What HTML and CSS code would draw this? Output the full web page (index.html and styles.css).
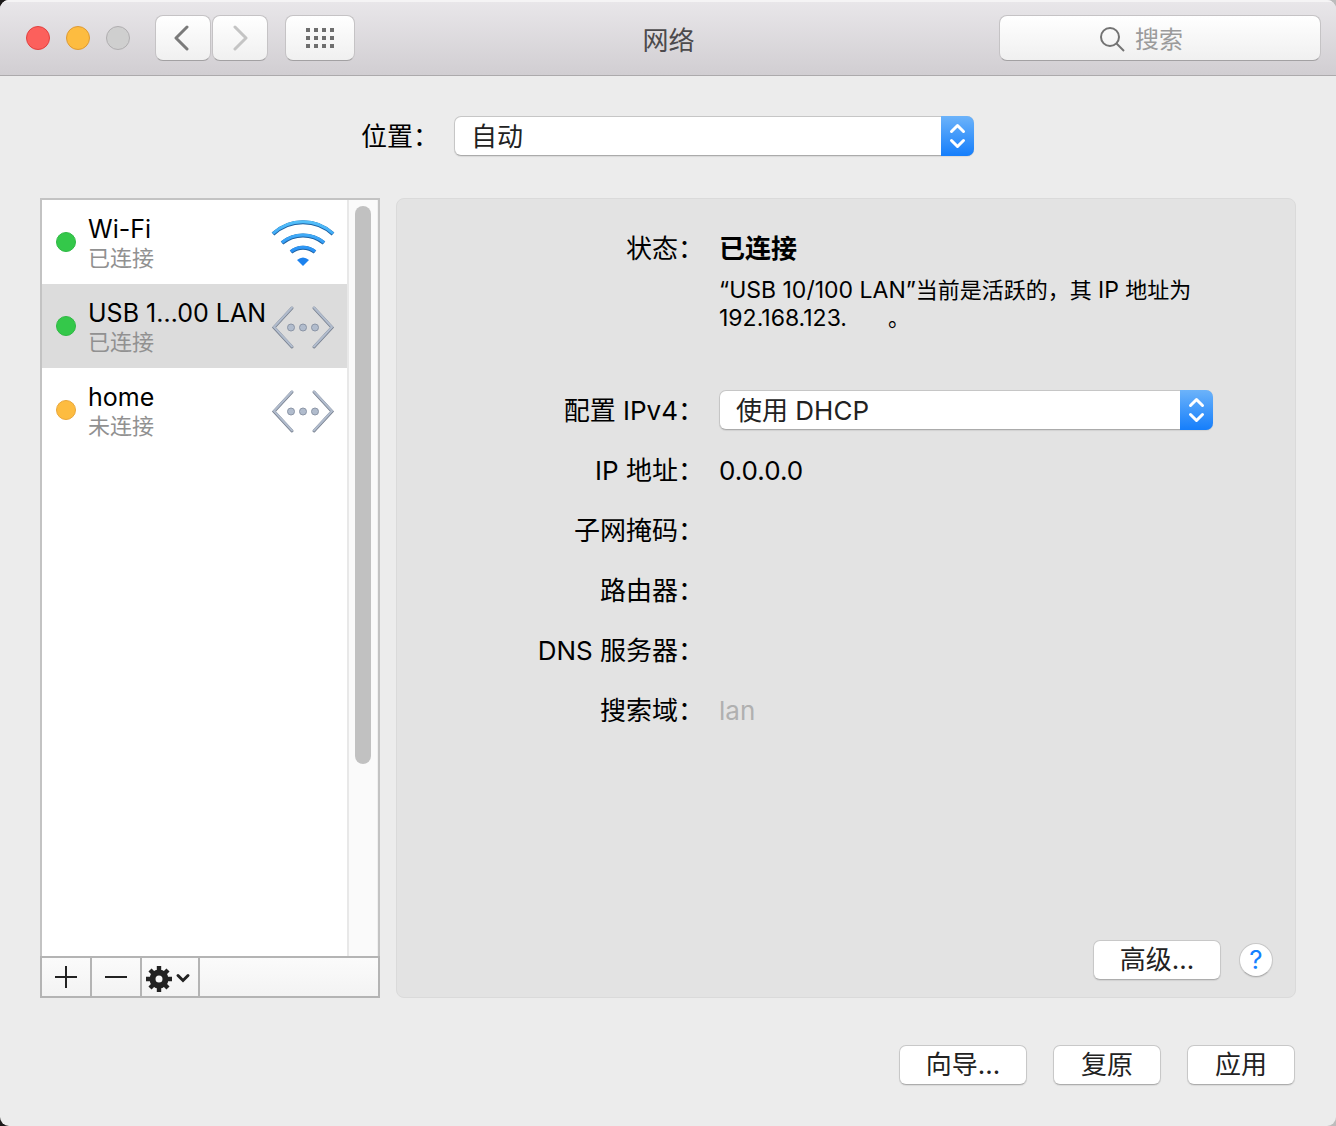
FILE: index.html
```html
<!DOCTYPE html>
<html lang="zh-CN">
<head>
<meta charset="utf-8">
<title>网络</title>
<link rel="stylesheet" href="styles.css">
</head>
<body>
<div class="window">
  <header class="titlebar">
    <div class="titlebar-left">
      <div class="lights">
        <button class="light light-close" aria-label="关闭"></button>
        <button class="light light-min" aria-label="最小化"></button>
        <button class="light light-zoom" aria-label="缩放" disabled></button>
      </div>
      <div class="nav">
        <button class="tool" aria-label="后退">
          <svg width="18" height="26" viewBox="0 0 18 26" fill="none" stroke="#7a7a7a" stroke-width="3" stroke-linecap="round" stroke-linejoin="round"><path d="M13 2 2 13l11 11"/></svg>
        </button>
        <button class="tool" aria-label="前进">
          <svg width="16" height="26" viewBox="0 0 16 26" fill="none" stroke="#c4c4c4" stroke-width="3" stroke-linecap="round" stroke-linejoin="round"><path d="M3 2l11 11L3 24"/></svg>
        </button>
      </div>
      <button class="tool tool-grid" aria-label="显示全部">
        <svg width="28" height="20" viewBox="0 0 28 20" fill="#6e6e6e"><path d="M0 0h4v4H0zM8 0h4v4H8zM16 0h4v4h-4zM24 0h4v4h-4zM0 8h4v4H0zM8 8h4v4H8zM16 8h4v4h-4zM24 8h4v4h-4zM0 16h4v4H0zM8 16h4v4H8zM16 16h4v4h-4zM24 16h4v4h-4z"/></svg>
      </button>
    </div>
    <h1 class="title">网络</h1>
    <div class="search">
      <svg class="search-icon" width="26" height="26" viewBox="0 0 26 26" fill="none" stroke="#737373" stroke-width="2"><circle cx="10" cy="11" r="9"/><path d="M16 17l8 8"/></svg>
      <input class="search-input" type="text" placeholder="搜索" aria-label="搜索">
    </div>
  </header>

  <div class="location">
    <label for="location">位置：</label>
    <div class="popup popup-location">
      <select id="location"><option>自动</option></select>
      <svg class="popup-arrows" width="33" height="40" viewBox="0 0 33 40" fill="none" stroke="#fff" stroke-width="3" stroke-linecap="round" stroke-linejoin="round"><path d="M10.500 15.500l6-6 6 6M10.500 24.500l6 6 6-6"/></svg>
    </div>
  </div>

  <main class="main">
    <section class="sidebar">
      <div class="services">
        <ul class="service-list">
          <li class="service">
            <span class="dot dot-on"></span>
            <div class="service-text"><div class="service-name">Wi-Fi</div><div class="service-state">已连接</div></div>
            <svg width="64" height="48" viewBox="0 0 64 48" fill="none">
              <defs><linearGradient id="wifi" x1="0" y1="2" x2="0" y2="48" gradientUnits="userSpaceOnUse"><stop offset="0" stop-color="#55c2fa"/><stop offset="1" stop-color="#147af3"/></linearGradient></defs>
              <g stroke="#1c5f9f" stroke-width="4"><path d="M2 16A44 44 0 0 1 62 16M11 25A33 33 0 0 1 53 25M20 34A19 19 0 0 1 44 34"/></g>
              <g stroke="url(#wifi)" stroke-width="3"><path d="M2 15.500A44 44 0 0 1 62 15.500M11 24.500A33 33 0 0 1 53 24.500M20 33.500A19 19 0 0 1 44 33.500"/></g>
              <path d="M26 42q6-5 12 0l-6 6z" fill="#1c82ee"/>
            </svg>
          </li>
          <li class="service service-selected">
            <span class="dot dot-on"></span>
            <div class="service-text"><div class="service-name">USB 1…00 LAN</div><div class="service-state">已连接</div></div>
            <svg width="64" height="48" viewBox="0 0 64 48" fill="none">
              <g stroke="#77808f" stroke-width="3" stroke-linecap="round"><path d="M21 6 3 25.500l18 19.500M43 6l18 19.500L43 45"/></g>
              <g stroke="#b1bccd" stroke-width="2" stroke-linecap="round"><path d="M21 5.500 3 25l18 19.500M43 5.500 61 25 43 44.500"/></g>
              <g fill="#b1bccd" stroke="#8b95a6"><circle cx="20" cy="25.500" r="3.500"/><circle cx="32" cy="25.500" r="3.500"/><circle cx="44" cy="25.500" r="3.500"/></g>
            </svg>
          </li>
          <li class="service">
            <span class="dot dot-idle"></span>
            <div class="service-text"><div class="service-name">home</div><div class="service-state">未连接</div></div>
            <svg width="64" height="48" viewBox="0 0 64 48" fill="none">
              <g stroke="#77808f" stroke-width="3" stroke-linecap="round"><path d="M21 6 3 25.500l18 19.500M43 6l18 19.500L43 45"/></g>
              <g stroke="#b1bccd" stroke-width="2" stroke-linecap="round"><path d="M21 5.500 3 25l18 19.500M43 5.500 61 25 43 44.500"/></g>
              <g fill="#b1bccd" stroke="#8b95a6"><circle cx="20" cy="25.500" r="3.500"/><circle cx="32" cy="25.500" r="3.500"/><circle cx="44" cy="25.500" r="3.500"/></g>
            </svg>
          </li>
        </ul>
        <div class="scrollbar"><div class="thumb"></div></div>
      </div>
      <div class="actions">
        <button class="action" aria-label="添加"><svg width="22" height="22" viewBox="0 0 22 22" fill="#222"><path d="M10 0h2v10h10v2H12v10h-2V12H0v-2h10z"/></svg></button>
        <button class="action" aria-label="移除"><svg width="22" height="22" viewBox="0 0 22 22" fill="#222"><path d="M0 10h22v2H0z"/></svg></button>
        <button class="action action-menu" aria-label="操作">
          <svg width="48" height="26" viewBox="0 0 48 26" fill="none" stroke="#222">
            <circle cx="13" cy="13" r="6.500" stroke-width="6"/>
            <path stroke-width="4.400" d="M13 0v5M13 21v5M0 13h5M21 13h5"/>
            <path stroke-width="4.400" d="M4 4l3.500 3.500M22 4l-3.500 3.500M4 22l3.500-3.500M22 22l-3.500-3.500"/>
            <path stroke-width="3" stroke-linecap="round" d="M32 9.500l5 5 5-5"/>
          </svg>
        </button>
      </div>
    </section>

    <section class="panel">
      <div class="form">
        <span class="label">状态：</span>
        <strong class="status">已连接</strong>
        <p class="detail"><span class="latin">“USB 10/100 LAN”</span>当前是活跃的，其 <span class="latin">IP</span> 地址为 <span class="latin">192.168.123.</span><span class="stop">。</span></p>
      </div>
      <div class="form form-rows">
        <label class="label" for="ipv4">配置 IPv4：</label>
        <div class="popup">
          <select id="ipv4"><option>使用 DHCP</option></select>
          <svg class="popup-arrows" width="33" height="40" viewBox="0 0 33 40" fill="none" stroke="#fff" stroke-width="3" stroke-linecap="round" stroke-linejoin="round"><path d="M10.500 15.500l6-6 6 6M10.500 24.500l6 6 6-6"/></svg>
        </div>
        <label class="label" for="ip">IP 地址：</label>
        <output class="value" id="ip">0.0.0.0</output>
        <label class="label" for="mask">子网掩码：</label>
        <output class="value" id="mask"></output>
        <label class="label" for="router">路由器：</label>
        <output class="value" id="router"></output>
        <label class="label" for="dns">DNS 服务器：</label>
        <input class="value" id="dns" type="text">
        <label class="label" for="domain">搜索域：</label>
        <input class="value" id="domain" type="text" placeholder="lan">
      </div>
      <div class="panel-footer">
        <button class="button button-wide">高级…</button>
        <button class="help" aria-label="帮助">?</button>
      </div>
    </section>
  </main>

  <footer class="footer">
    <button class="button button-wide">向导…</button>
    <button class="button">复原</button>
    <button class="button">应用</button>
  </footer>
</div>
</body>
</html>
```
FILE: styles.css
```css
* {
  box-sizing: border-box;
}

body {
  margin: 0;
  background: linear-gradient(90deg, #1c1a1a 50%, #bcbcbc 50%);
  color: #000;
  font: 26px/32px Inter, "Noto Sans CJK SC", sans-serif;
}

button,
input,
select {
  margin: 0;
  padding: 0;
  border: 0;
  color: inherit;
  font: inherit;
}

svg {
  display: block;
  flex: none;
}

.window {
  display: flex;
  flex-direction: column;
  min-height: 100vh;
  border-radius: 9px;
  background: #ececec;
  overflow: hidden;
}

/* Title bar */

.titlebar {
  display: grid;
  grid-template-columns: 1fr auto 1fr;
  align-items: center;
  height: 76px;
  padding: 0 15px 0 26px;
  border-bottom: 1px solid #acaaac;
  background: linear-gradient(#e9e7ea, #d1ced2);
  box-shadow: inset 0 2px #f5f4f5;
}

.titlebar-left {
  display: flex;
  align-items: center;
}

.lights {
  display: flex;
  gap: 16px;
  margin-right: 25px;
}

.light {
  width: 24px;
  height: 24px;
  border: 1px solid;
  border-radius: 50%;
}

.light-close {
  border-color: #e2403f;
  background: #fc605c;
}

.light-min {
  border-color: #de9a34;
  background: #fdbc40;
}

.light-zoom {
  border-color: #b0aeb0;
  background: #cfcfcf;
}

.nav {
  display: flex;
  gap: 1px;
  margin-right: 17px;
}

.tool,
.search-input {
  height: 46px;
  border: 1px solid #c5c3c5;
  border-bottom-color: #a3a1a3;
  border-radius: 8px;
  background: linear-gradient(#fff, #f0f0f0);
}

.tool {
  display: flex;
  align-items: center;
  justify-content: center;
  width: 56px;
}

.tool-grid {
  width: 70px;
}

.title {
  margin: 0;
  padding: 6px 10px 0 0;
  color: #4c4a4c;
  font-size: 26px;
  font-weight: 400;
}

.search {
  position: relative;
  justify-self: end;
  width: 322px;
}

.search-icon {
  position: absolute;
  top: 11px;
  left: calc(50% - 60px);
}

.search-input {
  display: block;
  width: 100%;
  padding: 4px 2px 0 0;
  font-size: 24px;
  text-align: center;
}

.search-input::placeholder {
  color: #9b9b9b;
}

/* Location and pop-up menus */

.location {
  display: flex;
  align-items: center;
  justify-content: center;
  gap: 15px;
  padding: 40px 41px 42px 40px;
}

.location label {
  padding-top: 2px;
}

.popup {
  position: relative;
}

.popup-location {
  width: 520px;
}

.popup select {
  display: block;
  width: 100%;
  height: 40px;
  padding: 2px 48px 0 16px;
  border: 1px solid #c6c6c6;
  border-bottom-color: #ababab;
  border-radius: 7px;
  background: #fff;
  box-shadow: 0 1px 1px #00000014;
  color: #222;
  appearance: none;
}

.popup-arrows {
  position: absolute;
  top: 0;
  right: 0;
  border-radius: 0 7px 7px 0;
  background: linear-gradient(#6cb3fa, #157efb);
  pointer-events: none;
}

/* Service list */

.main {
  display: grid;
  flex: 1;
  grid-template-columns: 340px 1fr;
  gap: 16px;
  padding: 0 40px;
}

.sidebar {
  display: flex;
  flex-direction: column;
}

.services {
  display: flex;
  flex: 1;
  border: 2px solid #c3c3c3;
  border-bottom: 0;
  background: #fff;
}

.service-list {
  flex: 1;
  margin: 0;
  padding: 0;
  list-style: none;
}

.service {
  display: flex;
  align-items: center;
  height: 84px;
  padding: 0 12px 0 14px;
}

.service-selected {
  background: #dcdcdc;
}

.dot {
  flex: none;
  width: 20px;
  height: 20px;
  margin-right: 12px;
  border: 1px solid;
  border-radius: 50%;
}

.dot-on {
  border-color: #2fb944;
  background: #34c84a;
}

.dot-idle {
  border-color: #e9a73a;
  background: #fdbc40;
}

.service-text {
  flex: 1;
  min-width: 0;
  white-space: nowrap;
}

.service-name {
  font-size: 25px;
}

.service-state {
  color: #919191;
  font-size: 22px;
  line-height: 26px;
}

.scrollbar {
  width: 30px;
  flex: none;
  padding: 6px 5px 6px 6px;
  border-right: 1px solid #f0f0f0;
  border-left: 2px solid #e8e8e8;
  background: #fafafa;
}

.services .scrollbar {
  width: 31px;
}

.thumb {
  width: 16px;
  height: 75%;
  border-radius: 8px;
  background: #c1c1c1;
}

.actions {
  display: flex;
  height: 42px;
  border: 2px solid #b4b4b4;
  background: linear-gradient(#fbfbfb, #f3f3f3);
}

.action {
  display: flex;
  align-items: center;
  justify-content: center;
  width: 50px;
  border-right: 2px solid #b4b4b4;
  background: none;
}

.action-menu {
  width: 58px;
  padding-top: 4px;
}

/* Details panel */

.panel {
  display: flex;
  flex-direction: column;
  padding: 32px 22px 17px 0;
  border: 1px solid #dadada;
  border-radius: 8px;
  background: #e3e3e3;
}

.form {
  display: grid;
  grid-template-columns: 307px minmax(0, 494px);
  column-gap: 15px;
  line-height: 36px;
}

.form-rows {
  grid-auto-rows: 60px;
  align-items: center;
  margin-top: 48px;
}

.label {
  text-align: right;
}

.form-rows .label,
.value {
  padding-top: 2px;
}

.status {
  font-weight: 700;
}

.detail {
  grid-column: 2;
  margin: 9px 0 0;
  font-size: 22px;
  line-height: 28px;
}

.latin {
  font-size: 23px;
}

.stop {
  padding-left: 41px;
}

input.value {
  width: 100%;
  background: none;
}

input.value::placeholder {
  color: #b0b0b0;
}

.panel-footer {
  display: flex;
  align-items: center;
  justify-content: flex-end;
  gap: 18px;
  margin-top: auto;
}

.button {
  width: 108px;
  height: 40px;
  border: 1px solid #c8c8c8;
  border-bottom-color: #adadad;
  border-radius: 7px;
  background: #fff;
  box-shadow: 0 1px 1px #00000014;
  color: #222;
}

.button-wide {
  width: 128px;
}

.help {
  width: 34px;
  height: 34px;
  border: 1px solid #c8c8c8;
  border-bottom-color: #adadad;
  border-radius: 50%;
  background: #fff;
  box-shadow: 0 1px 1px #00000014;
  color: #1581ff;
}

.footer {
  display: flex;
  justify-content: flex-end;
  gap: 26px;
  padding: 47px 41px 41px;
}
```
